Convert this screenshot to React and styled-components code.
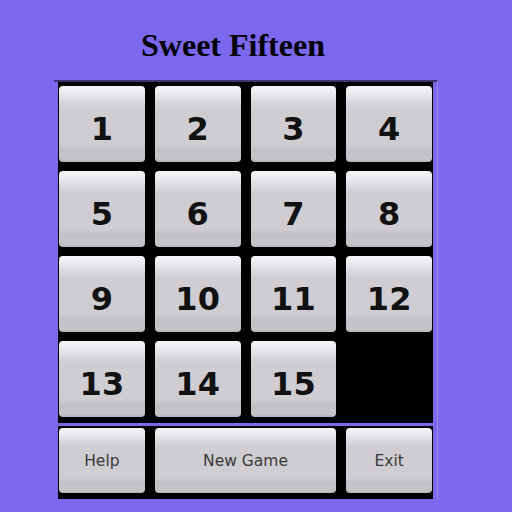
import React from "react";
import styled, { createGlobalStyle } from "styled-components";

const GlobalStyle = createGlobalStyle`
  html, body {
    margin: 0;
    padding: 0;
    background-color: #7b68ee;
  }
  body {
    width: 512px;
    height: 512px;
    overflow: hidden;
  }
`;

const Page = styled.div`
  width: 512px;
  height: 512px;
  background-color: #7b68ee;
  padding-top: 29px;
  box-sizing: border-box;
`;

const Title = styled.h1`
  margin: 0;
  padding-right: 46px;
  font-family: "Liberation Serif", "Times New Roman", serif;
  font-weight: bold;
  font-size: 32px;
  line-height: 32px;
  text-align: center;
  color: #000;
`;

const Frame = styled.div`
  margin: 19px 0 0 54px;
  width: 384px;
  box-sizing: border-box;
  padding: 0 4px;
  border-top: 2px solid #3b3372;
  border-right: 1px solid rgba(255, 255, 255, 0.22);
`;

const Board = styled.div`
  background-color: #000;
  padding: 4px 1px 6px 1px;
  display: grid;
  grid-template-columns: repeat(4, 1fr);
  grid-auto-rows: 76px;
  column-gap: 10px;
  row-gap: 9px;
`;

const Controls = styled.div`
  margin-top: 3px;
  background-color: #000;
  padding: 2px 1px 6px 1px;
  display: grid;
  grid-template-columns: repeat(4, 1fr);
  grid-auto-rows: 65px;
  column-gap: 10px;
`;

const Key = styled.button`
  all: unset;
  box-sizing: border-box;
  display: flex;
  align-items: center;
  justify-content: center;
  border-radius: 4px;
  grid-column: span ${(p) => p.$span || 1};
  background: linear-gradient(
    to bottom,
    #f7f5f7 0%,
    #ebe9ed 10%,
    #d5d3d7 24%,
    #cfcdd1 30%,
    #cfcdd1 76%,
    #c3c1c5 84%,
    #c6c4c8 96%,
    #b6b4b8 100%
  );
  color: ${(p) => (p.$small ? "#3a3a3a" : "#111")};
  font-family: "DejaVu Sans", "Open Sans", sans-serif;
  font-weight: ${(p) => (p.$small ? "normal" : "bold")};
  font-size: ${(p) => (p.$small ? "15.5px" : "32px")};
  padding-top: ${(p) => (p.$small ? "0" : "10px")};
`;

const Hole = styled.div`
  background-color: #000;
`;

const tiles = [1, 2, 3, 4, 5, 6, 7, 8, 9, 10, 11, 12, 13, 14, 15];

export default function App() {
  return (
    <Page>
      <GlobalStyle />
      <Title>Sweet Fifteen</Title>
      <Frame>
        <Board>
          {tiles.map((n) => (
            <Key key={n}>{n}</Key>
          ))}
          <Hole />
        </Board>
        <Controls>
          <Key $small>Help</Key>
          <Key $small $span={2}>New Game</Key>
          <Key $small>Exit</Key>
        </Controls>
      </Frame>
    </Page>
  );
}
